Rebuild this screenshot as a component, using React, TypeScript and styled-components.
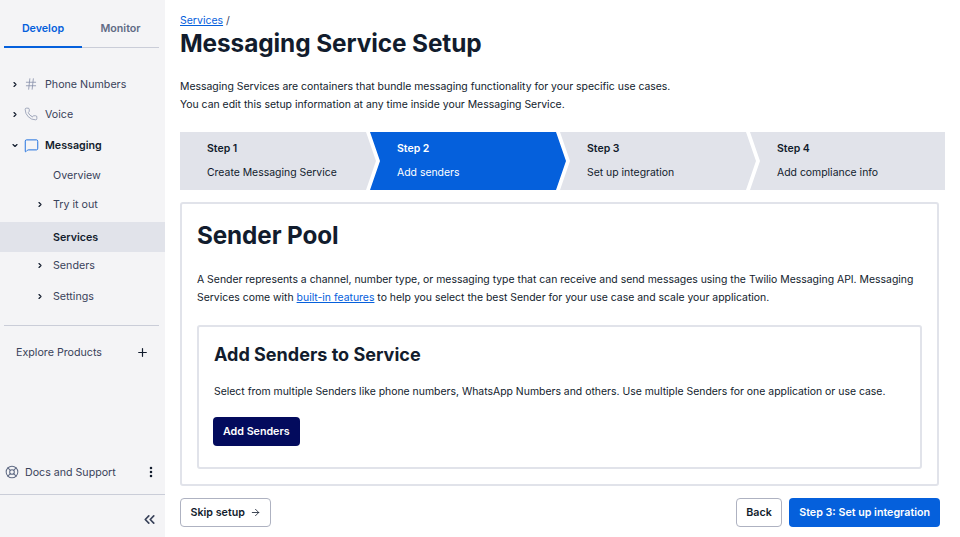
import styled, { createGlobalStyle } from 'styled-components';
import { ArrowRight, ChevronDown, ChevronRight, ChevronsLeft, EllipsisVertical, Hash, LifeBuoy, MessageSquare, Phone, Plus } from 'lucide-react';
import type { ReactNode } from 'react';

const GlobalStyle = createGlobalStyle`
  html, body { margin: 0; padding: 0; background: #fff; }
  * { box-sizing: border-box; }
  body { font-family: Inter, "Liberation Sans", sans-serif; color: #121c2d; overflow: hidden; }
`;

const Page = styled.div`
  display: flex;
  width: 960px;
  height: 537px;
  overflow: hidden;
`;

const Sidebar = styled.aside`
  width: 165px;
  flex: none;
  height: 100%;
  background: #f4f4f6;
  display: flex;
  flex-direction: column;
`;

const Tabs = styled.div`
  display: flex;
  margin: 13px 6px 0 4px;
  border-bottom: 1px solid #cacdd8;
`;

const Tab = styled.div<{ $active?: boolean }>`
  flex: ${({ $active }) => ($active ? '0 0 78px' : '1')};
  height: 35px;
  margin-bottom: -1px;
  padding-top: 9px;
  text-align: center;
  font-size: 10.7px;
  font-weight: 600;
  color: ${({ $active }) => ($active ? '#0560dc' : '#606b85')};
  border-bottom: 2px solid ${({ $active }) => ($active ? '#0560dc' : 'transparent')};
`;

const NavList = styled.nav`
  display: flex;
  flex-direction: column;
  margin-top: 21px;
`;

const NavRow = styled.div<{ $height: number; $sub?: boolean; $selected?: boolean; $top?: number }>`
  display: flex;
  align-items: center;
  height: ${({ $height }) => $height}px;
  margin-top: ${({ $top }) => $top ?? 0}px;
  padding-left: ${({ $sub }) => ($sub ? '36px' : '11px')};
  font-size: 10.7px;
  color: #39425a;
  background: ${({ $selected }) => ($selected ? '#e1e3ea' : 'transparent')};
`;

const Caret = styled.span`
  width: 8px;
  flex: none;
  display: flex;
  align-items: center;
  justify-content: center;
  color: #121c2d;
`;

const NavIcon = styled.span`
  width: 20px;
  margin-left: 2px;
  flex: none;
  display: flex;
  justify-content: center;
  color: #8891aa;
`;

const NavLabel = styled.span<{ $bold?: boolean; $gap: number }>`
  margin-left: ${({ $gap }) => $gap}px;
  font-weight: ${({ $bold }) => ($bold ? 600 : 400)};
  color: ${({ $bold }) => ($bold ? '#121c2d' : '#39425a')};
`;

const Divider = styled.div`
  height: 1px;
  margin: 12px 6px 0 4px;
  background: #cacdd8;
`;

const ExploreRow = styled.div`
  display: flex;
  align-items: center;
  justify-content: space-between;
  height: 14px;
  margin-top: 19px;
  padding: 0 16px 0 16px;
  font-size: 10.7px;
  color: #39425a;
`;

const DocsRow = styled.div`
  display: flex;
  align-items: center;
  margin-top: auto;
  height: 14px;
  padding: 0 7px 0 5px;
  font-size: 10.65px;
  color: #39425a;
`;

const DocsLabel = styled.span`
  margin-left: 6px;
  flex: 1;
`;

const CollapseBar = styled.div`
  display: flex;
  align-items: center;
  justify-content: flex-end;
  height: 43px;
  margin-top: 15px;
  padding: 6px 7px 0 0;
  border-top: 1px solid #cacdd8;
  color: #39425a;
`;

const Main = styled.main`
  flex: 1;
  min-width: 0;
  padding: 14px 15px 0 15px;
  display: flex;
  flex-direction: column;
`;

const Breadcrumb = styled.div`
  font-size: 10.5px;
  line-height: 13px;
  color: #39425a;
`;

const Link = styled.a`
  color: #0560dc;
  text-decoration: underline;
`;

const PageTitle = styled.h1`
  margin: 1px 0 0;
  font-size: 24.4px;
  line-height: 30px;
  font-weight: 700;
  letter-spacing: -0.1px;
  color: #121c2d;
`;

const Intro = styled.p`
  margin: 20px 0 0;
  font-size: 10.43px;
  line-height: 18px;
  color: #121c2d;
`;

const Stepper = styled.div`
  display: flex;
  margin-top: 18px;
  height: 58px;
`;

const Step = styled.div<{ $active?: boolean; $first?: boolean; $last?: boolean }>`
  flex: none;
  width: ${({ $last }) => ($last ? 195 : 196)}px;
  margin-left: ${({ $first }) => ($first ? 0 : -6)}px;
  padding: 10px 0 0 27px;
  background: ${({ $active }) => ($active ? '#0560dc' : '#e1e3ea')};
  color: ${({ $active }) => ($active ? '#fff' : '#121c2d')};
  clip-path: ${({ $first, $last }) => {
    const left = $first ? '0 100%' : '0 100%, 10px 50%';
    const right = $last ? '100% 0, 100% 100%' : 'calc(100% - 10px) 0, 100% 50%, calc(100% - 10px) 100%';
    return `polygon(0 0, ${right}, ${left})`;
  }};
`;

const StepNumber = styled.div`
  font-size: 10.5px;
  line-height: 14px;
  font-weight: 600;
`;

const StepText = styled.div`
  margin-top: 10px;
  font-size: 10.43px;
  line-height: 14px;
`;

const Card = styled.section`
  margin-top: 12px;
  width: 759px;
  height: 284px;
  padding: 17px 15px 15px;
  border: 2px solid #e1e3ea;
  border-radius: 3px;
  background: #fff;
`;

const CardTitle = styled.h2`
  margin: 0;
  font-size: 24.25px;
  line-height: 30px;
  font-weight: 700;
  letter-spacing: -0.1px;
`;

const CardText = styled.p`
  margin: 20px 0 0;
  font-size: 10.43px;
  line-height: 18px;
  color: #121c2d;
`;

const InnerCard = styled.div`
  margin-top: 18px;
  height: 144px;
  padding: 16px 15px;
  border: 2px solid #e1e3ea;
  border-radius: 3px;
`;

const InnerTitle = styled.h3`
  margin: 0;
  font-size: 18.05px;
  line-height: 24px;
  font-weight: 700;
`;

const InnerText = styled.p`
  margin: 16px 0 0;
  font-size: 10.43px;
  line-height: 18px;
`;

const Button = styled.button<{ $variant: 'navy' | 'primary' | 'secondary' }>`
  display: inline-flex;
  align-items: center;
  justify-content: center;
  gap: 5px;
  height: 29px;
  padding: 0 9.5px;
  font-family: inherit;
  font-size: 10.7px;
  font-weight: 600;
  border-radius: 4px;
  border: ${({ $variant }) => ($variant === 'secondary' ? '1px solid #aeb2c1' : 'none')};
  color: ${({ $variant }) => ($variant === 'secondary' ? '#121c2d' : '#fff')};
  background: ${({ $variant }) =>
    $variant === 'navy' ? '#030b5d' : $variant === 'primary' ? '#0560dc' : '#fff'};
`;

const AddButton = styled(Button)`
  margin-top: 16px;
  margin-left: -1px;
  padding: 0 10px;
`;

const PrimaryButton = styled(Button)`
  padding: 0 10px;
`;

const Footer = styled.div`
  display: flex;
  align-items: center;
  margin-top: 12px;
  width: 760px;
  gap: 7px;
`;

const Spacer = styled.div`
  flex: 1;
`;

interface NavItemProps {
  label: string;
  height: number;
  top?: number;
  caret?: 'right' | 'down';
  icon?: ReactNode;
  sub?: boolean;
  bold?: boolean;
  selected?: boolean;
}

const NavItem = ({ label, height, top, caret, icon, sub, bold, selected }: NavItemProps) => (
  <NavRow $height={height} $top={top} $sub={sub} $selected={selected}>
    <Caret>
      {caret === 'right' && <ChevronRight size={11} strokeWidth={3.5} />}
      {caret === 'down' && <ChevronDown size={11} strokeWidth={3.5} />}
    </Caret>
    {icon && <NavIcon>{icon}</NavIcon>}
    <NavLabel $bold={bold} $gap={icon ? 4 : 9}>{label}</NavLabel>
  </NavRow>
);

export default function App() {
  return (
    <Page>
      <GlobalStyle />
      <Sidebar>
        <Tabs>
          <Tab $active>Develop</Tab>
          <Tab>Monitor</Tab>
        </Tabs>
        <NavList>
          <NavItem label="Phone Numbers" height={30} caret="right" icon={<Hash size={14} strokeWidth={1.4} />} />
          <NavItem label="Voice" height={30} caret="right" icon={<Phone size={14} strokeWidth={1.3} />} />
          <NavItem label="Messaging" height={32} caret="down" bold icon={<MessageSquare size={15} strokeWidth={1.4} color="#0560dc" />} />
          <NavItem label="Overview" height={29} sub />
          <NavItem label="Try it out" height={28} sub caret="right" />
          <NavItem label="Services" height={30} top={4} sub bold selected />
          <NavItem label="Senders" height={27} sub caret="right" />
          <NavItem label="Settings" height={34} sub caret="right" />
        </NavList>
        <Divider />
        <ExploreRow>
          Explore Products
          <Plus size={13} strokeWidth={2.2} color="#121c2d" />
        </ExploreRow>
        <DocsRow>
          <LifeBuoy size={14} strokeWidth={1.75} color="#606b85" />
          <DocsLabel>Docs and Support</DocsLabel>
          <EllipsisVertical size={14} strokeWidth={2.4} color="#121c2d" />
        </DocsRow>
        <CollapseBar>
          <ChevronsLeft size={17} strokeWidth={2.4} />
        </CollapseBar>
      </Sidebar>
      <Main>
        <Breadcrumb>
          <Link>Services</Link> /
        </Breadcrumb>
        <PageTitle>Messaging Service Setup</PageTitle>
        <Intro>
          Messaging Services are containers that bundle messaging functionality for your specific use cases.
          <br />
          You can edit this setup information at any time inside your Messaging Service.
        </Intro>
        <Stepper>
          <Step $first>
            <StepNumber>Step 1</StepNumber>
            <StepText>Create Messaging Service</StepText>
          </Step>
          <Step $active>
            <StepNumber>Step 2</StepNumber>
            <StepText>Add senders</StepText>
          </Step>
          <Step>
            <StepNumber>Step 3</StepNumber>
            <StepText>Set up integration</StepText>
          </Step>
          <Step $last>
            <StepNumber>Step 4</StepNumber>
            <StepText>Add compliance info</StepText>
          </Step>
        </Stepper>
        <Card>
          <CardTitle>Sender Pool</CardTitle>
          <CardText>
            A Sender represents a channel, number type, or messaging type that can receive and send messages using the Twilio Messaging API. Messaging Services come with <Link>built-in features</Link> to help you select the best Sender for your use case and scale your application.
          </CardText>
          <InnerCard>
            <InnerTitle>Add Senders to Service</InnerTitle>
            <InnerText>
              Select from multiple Senders like phone numbers, WhatsApp Numbers and others. Use multiple Senders for one application or use case.
            </InnerText>
            <AddButton $variant="navy">Add Senders</AddButton>
          </InnerCard>
        </Card>
        <Footer>
          <Button $variant="secondary">
            Skip setup
            <ArrowRight size={11} strokeWidth={1.75} />
          </Button>
          <Spacer />
          <Button $variant="secondary">Back</Button>
          <PrimaryButton $variant="primary">Step 3: Set up integration</PrimaryButton>
        </Footer>
      </Main>
    </Page>
  );
}
